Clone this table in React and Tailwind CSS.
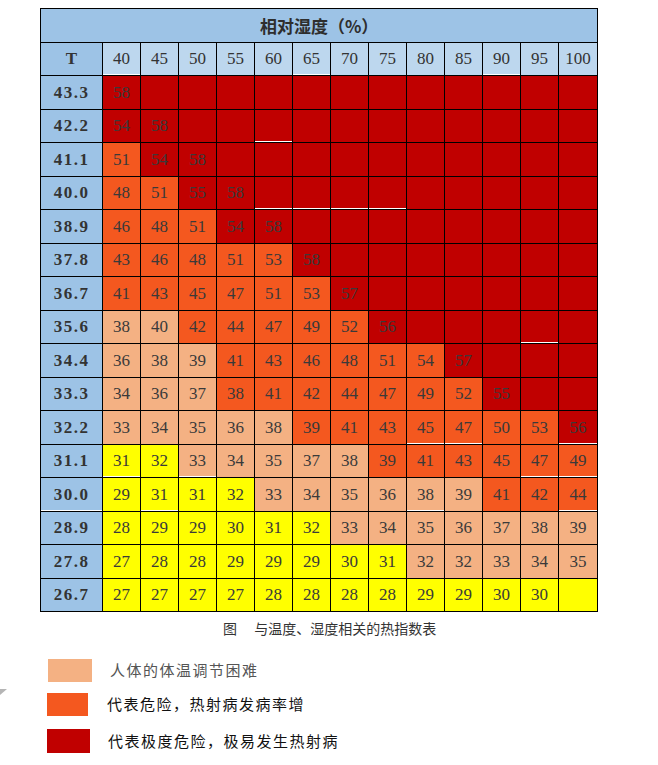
const bg = {
  R: 'bg-[#c00000]',
  O: 'bg-[#f4581f]',
  P: 'bg-[#f4b183]',
  Y: 'bg-[#ffff00]',
};

const hums = [40, 45, 50, 55, 60, 65, 70, 75, 80, 85, 90, 95, 100];

// each cell: value + colour letter, or just a letter for an empty cell
const rows = [
  ['43.3', '58R R R R R R R R R R R R R'],
  ['42.2', '54R 58R R R R R R R R R R R R'],
  ['41.1', '51O 54R 58R R R R R R R R R R R'],
  ['40.0', '48O 51O 55R 58R R R R R R R R R R'],
  ['38.9', '46O 48O 51O 54R 58R R R R R R R R R'],
  ['37.8', '43O 46O 48O 51O 53O 58R R R R R R R R'],
  ['36.7', '41O 43O 45O 47O 51O 53O 57R R R R R R R'],
  ['35.6', '38P 40P 42O 44O 47O 49O 52O 56R R R R R R'],
  ['34.4', '36P 38P 39P 41O 43O 46O 48O 51O 54O 57R R R R'],
  ['33.3', '34P 36P 37P 38O 41O 42O 44O 47O 49O 52O 55R R R'],
  ['32.2', '33P 34P 35P 36P 38P 39O 41O 43O 45O 47O 50O 53O 56R'],
  ['31.1', '31Y 32Y 33P 34P 35P 37P 38P 39O 41O 43O 45O 47O 49O'],
  ['30.0', '29Y 31Y 31Y 32Y 33P 34P 35P 36P 38P 39P 41O 42O 44O'],
  ['28.9', '28Y 29Y 29Y 30Y 31Y 32Y 33P 34P 35P 36P 37P 38P 39P'],
  ['27.8', '27Y 28Y 28Y 29Y 29Y 29Y 30Y 31Y 32P 32P 33P 34P 35P'],
  ['26.7', '27Y 27Y 27Y 27Y 28Y 28Y 28Y 28Y 29Y 29Y 30Y 30Y Y'],
];

// little white lines left over from the scan (row-col, col -1 = T column)
const white = new Set([
  'h-0', 'h-5', 'h-10',
  '1-4',
  '3-4', '3-5', '3-6', '3-7',
  '7-11',
  '10-8', '10-9', '10-12',
  '11-0', '11-2', '11-11', '11-12',
  '12--1', '12-1', '12-8', '12-12',
]);

const line = 'shadow-[inset_0_-1px_0_#ffffff]';

const legend = [
  { color: 'bg-[#f4b183]', box: 'ml-[48px] w-[44px] h-[23px]', gap: 'ml-[18px]', text: '人体的体温调节困难', tone: 'text-[#555]' },
  { color: 'bg-[#f4581f]', box: 'ml-[47px] w-[41px] h-[23px]', gap: 'ml-[19px]', text: '代表危险，热射病发病率增', tone: 'text-[#111]' },
  { color: 'bg-[#c00000]', box: 'ml-[47px] w-[43px] h-[24px]', gap: 'ml-[18px]', text: '代表极度危险，极易发生热射病', tone: 'text-[#111]' },
];

export default function App() {
  return (
    <div className="relative w-[658px] h-[765px] bg-white overflow-hidden font-['Noto_Sans_CJK_SC',sans-serif]">
      <div className="pt-[8px] pl-[40px]">
        <table className="table-fixed border-collapse w-[556px] text-[#333]">
          <colgroup>
            <col className="w-[62px]" />
            {hums.map((h) => (
              <col key={h} className={h === 100 ? 'w-[39px]' : 'w-[38px]'} />
            ))}
          </colgroup>
          <thead>
            <tr className="h-[34px]">
              <th colSpan={14} className="border border-black bg-[#9dc3e6] text-[17px] font-bold text-center font-['Noto_Sans_CJK_SC',sans-serif] text-[#2e2e2e]">
                相对湿度（%）
              </th>
            </tr>
            <tr className="h-[33px]">
              <th className="border border-black bg-[#9dc3e6] font-['Liberation_Serif',serif] font-bold text-[17px] text-[#333]">T</th>
              {hums.map((h, i) => (
                <th
                  key={h}
                  className={`border border-black bg-[#bdd7ee] font-['Liberation_Serif',serif] font-normal text-[17px] text-[#333] ${white.has('h-' + i) ? line : ''}`}
                >
                  {h}
                </th>
              ))}
            </tr>
          </thead>
          <tbody>
            {rows.map(([t, cells], r) => (
              <tr key={t} className="h-[33.5px]">
                <td className={`border border-black bg-[#9dc3e6] text-center font-['Liberation_Serif',serif] font-bold text-[17px] tracking-[1.5px] text-[#333] ${white.has(r + '--1') ? line : ''}`}>
                  {t}
                </td>
                {cells.split(' ').map((c, i) => (
                  <td
                    key={i}
                    className={`border border-black text-center font-['Liberation_Serif',serif] text-[17px] text-[#3a3a3a] ${bg[c.slice(-1)]} ${white.has(r + '-' + i) ? line : ''}`}
                  >
                    {c.slice(0, -1)}
                  </td>
                ))}
              </tr>
            ))}
          </tbody>
        </table>
      </div>

      <p className="pl-[223px] mt-[6px] text-[14px] leading-[20px] text-[#333]">
        图　 与温度、湿度相关的热指数表
      </p>

      <div className="mt-[21px] flex flex-col">
        {legend.map((l, i) => (
          <div key={i} className={`flex items-center ${i === 0 ? '' : i === 1 ? 'mt-[11px]' : 'mt-[13px]'}`}>
            <div className={`${l.box} ${l.color}`} />
            <span className={`${l.gap} text-[15px] tracking-[1.5px] ${l.tone}`}>{l.text}</span>
          </div>
        ))}
      </div>

      <svg className="absolute left-0 top-[689px]" width="8" height="7" viewBox="0 0 8 7">
        <polygon points="0,0 7,0 0,6" fill="#b5b5b5" />
      </svg>
    </div>
  );
}
